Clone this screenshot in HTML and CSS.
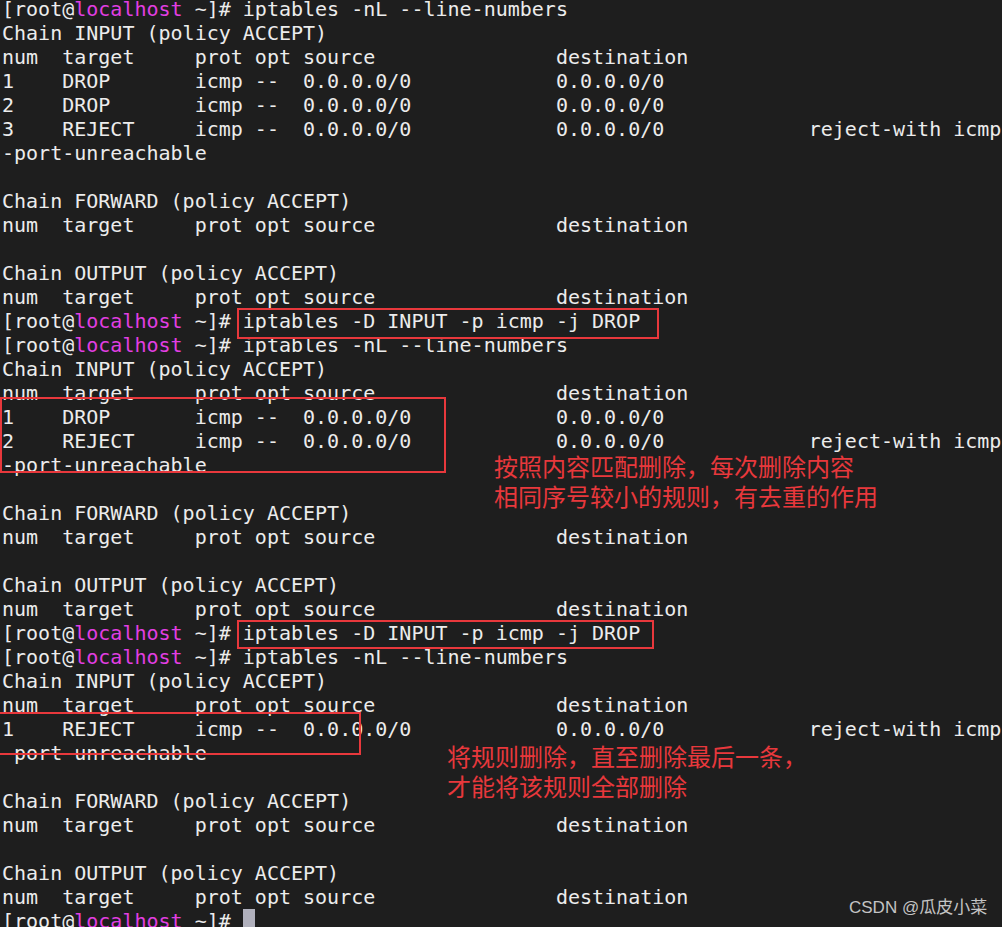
FILE: index.html
```html
<!DOCTYPE html>
<html lang="zh-CN">
<head>
<meta charset="utf-8">
<title>iptables</title>
<link rel="stylesheet" href="styles.css">
</head>
<body>
<div class="screen">
<pre class="term">[root@<span class="host">localhost</span> ~]# iptables -nL --line-numbers
Chain INPUT (policy ACCEPT)
num  target     prot opt source               destination
1    DROP       icmp --  0.0.0.0/0            0.0.0.0/0
2    DROP       icmp --  0.0.0.0/0            0.0.0.0/0
3    REJECT     icmp --  0.0.0.0/0            0.0.0.0/0            reject-with icmp
-port-unreachable

Chain FORWARD (policy ACCEPT)
num  target     prot opt source               destination

Chain OUTPUT (policy ACCEPT)
num  target     prot opt source               destination
[root@<span class="host">localhost</span> ~]# iptables -D INPUT -p icmp -j DROP
[root@<span class="host">localhost</span> ~]# iptables -nL --line-numbers
Chain INPUT (policy ACCEPT)
num  target     prot opt source               destination
1    DROP       icmp --  0.0.0.0/0            0.0.0.0/0
2    REJECT     icmp --  0.0.0.0/0            0.0.0.0/0            reject-with icmp
-port-unreachable

Chain FORWARD (policy ACCEPT)
num  target     prot opt source               destination

Chain OUTPUT (policy ACCEPT)
num  target     prot opt source               destination
[root@<span class="host">localhost</span> ~]# iptables -D INPUT -p icmp -j DROP
[root@<span class="host">localhost</span> ~]# iptables -nL --line-numbers
Chain INPUT (policy ACCEPT)
num  target     prot opt source               destination
1    REJECT     icmp --  0.0.0.0/0            0.0.0.0/0            reject-with icmp
-port-unreachable

Chain FORWARD (policy ACCEPT)
num  target     prot opt source               destination

Chain OUTPUT (policy ACCEPT)
num  target     prot opt source               destination
[root@<span class="host">localhost</span> ~]# <span class="cursor"> </span></pre>

<div class="box box-1"></div>
<div class="box box-2"></div>
<div class="box box-3"></div>
<div class="box box-4"></div>

<div class="note note-1">按照内容匹配删除，每次删除内容<br>相同序号较小的规则，有去重的作用</div>
<div class="note note-2">将规则删除，直至删除最后一条，<br>才能将该规则全部删除</div>

<div class="watermark">CSDN @瓜皮小菜</div>
</div>
</body>
</html>
```

FILE: styles.css
```css
html, body {
  margin: 0;
  padding: 0;
  background: #1e1e1e;
  overflow: hidden;
}

.screen {
  position: relative;
  width: 1002px;
  height: 927px;
  overflow: hidden;
  background: #1e1e1e;
}

.term {
  margin: -3px 0 0 0;
  padding: 0 0 0 2px;
  font-family: "DejaVu Sans Mono", monospace;
  font-size: 20px;
  line-height: 24px;
  color: #ececec;
  white-space: pre;
}

.host {
  color: #e23ee2;
}

.cursor {
  background: #b0b0bc;
}

.box {
  position: absolute;
  border: 2px solid #e8383c;
  box-sizing: border-box;
}

.box-1 { left: 237px; top: 308px; width: 422px; height: 31px; }
.box-2 { left: 0; top: 397px; width: 446px; height: 76px; }
.box-3 { left: 237px; top: 620px; width: 417px; height: 29px; }
.box-4 { left: -4px; top: 712px; width: 365px; height: 43px; }

.note {
  position: absolute;
  font-family: "Noto Sans CJK SC", sans-serif;
  font-size: 24px;
  line-height: 30px;
  color: #e8383c;
  white-space: nowrap;
}

.note-1 { left: 494px; top: 451px; }
.note-2 { left: 447px; top: 741px; }

.watermark {
  position: absolute;
  left: 849px;
  top: 897px;
  font-family: "Liberation Sans", "Noto Sans CJK SC", sans-serif;
  font-size: 17px;
  line-height: 22px;
  color: #c4c4c4;
  white-space: nowrap;
}
```
